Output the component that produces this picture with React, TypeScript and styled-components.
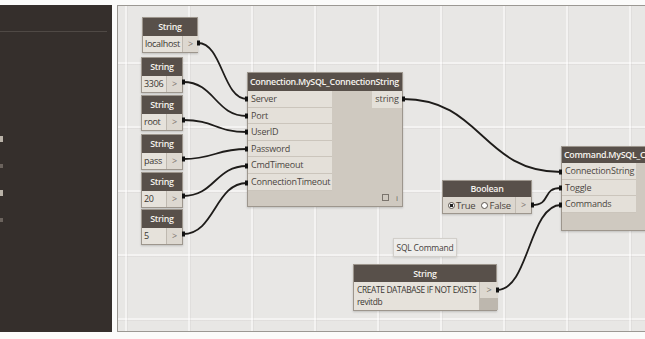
import React from 'react';
import styled, { createGlobalStyle } from 'styled-components';

const GlobalStyle = createGlobalStyle`
  html, body { margin: 0; padding: 0; background: #fbfbfa; }
  body { font-family: "Open Sans", "DejaVu Sans", sans-serif; }
`;

// canvas inner origin in page coords
const OX = 118;
const OY = 6;

const Page = styled.div`
  display: flex;
  gap: 5px;
  padding-top: 5px;
  height: 327px;
  width: 645px;
  overflow: hidden;
`;

const Sidebar = styled.div`
  width: 112px;
  flex-shrink: 0;
  background: #352f2c;
  display: flex;
  flex-direction: column;
`;

const SideHead = styled.div`
  height: 26px;
  margin-right: 5px;
  border-bottom: 1px solid #4f4945;
`;

const SideList = styled.div`
  display: flex;
  flex-direction: column;
  gap: 22px;
  padding-top: 104px;
`;

const SideChip = styled.div<{ $box?: boolean }>`
  margin-left: -4px;
  width: 7px;
  height: ${p => (p.$box ? 6 : 4)}px;
  background: ${p => (p.$box ? '#b9b2a8' : '#6b635d')};
`;

const Canvas = styled.div`
  position: relative;
  flex: 1;
  border: 1px solid #9b9893;
  border-right: none;
  background-color: #e8e7e5;
  background-image:
    linear-gradient(90deg, rgba(255,255,255,0.5) 2px, rgba(200,198,195,0.25) 2px, rgba(200,198,195,0.25) 3px, transparent 3px),
    linear-gradient(rgba(255,255,255,0.5) 2px, rgba(200,198,195,0.25) 2px, rgba(200,198,195,0.25) 3px, transparent 3px);
  background-size: 63px 64px;
  background-position: 7px 56px;
  overflow: hidden;
`;

const Wires = styled.svg`
  position: absolute;
  left: 0;
  top: 0;
  width: 100%;
  height: 100%;
  pointer-events: none;
  z-index: 2;
`;

const Node = styled.div<{ $x: number; $y: number; $w: number }>`
  position: absolute;
  left: ${p => p.$x - OX}px;
  top: ${p => p.$y - OY}px;
  width: ${p => p.$w}px;
  border: 1px solid #9d968d;
  box-sizing: border-box;
  box-shadow: 0 1px 2px rgba(0, 0, 0, 0.18);
  z-index: 1;
`;

const Header = styled.div<{ $h?: number; $left?: boolean }>`
  height: ${p => p.$h ?? 18}px;
  line-height: ${p => p.$h ?? 18}px;
  background: #58504a;
  color: #f6f3ee;
  font-size: 8.9px;
  font-weight: 600;
  letter-spacing: -0.3px;
  text-align: ${p => (p.$left ? 'left' : 'center')};
  padding: 0 2px;
  white-space: nowrap;
  overflow: hidden;
`;

const Body = styled.div<{ $h?: number }>`
  display: flex;
  background: #cfc9c0;
  ${p => (p.$h ? `height: ${p.$h}px;` : '')}
  position: relative;
`;

const ValueCell = styled.div`
  flex: 1;
  background: #e6e2db;
  border-right: 1px solid #bfb9b0;
  color: #3a3632;
  font-size: 9px;
  letter-spacing: -0.3px;
  line-height: 16px;
  padding: 0 2px;
  white-space: nowrap;
`;

const MultiLine = styled(ValueCell)`
  font-size: 8.4px;
  letter-spacing: -0.35px;
  line-height: 12px;
  padding: 2px 3px;
`;

const ArrowCell = styled.div<{ $w?: number }>`
  width: ${p => p.$w ?? 15}px;
  flex-shrink: 0;
  display: flex;
  flex-direction: column;
  color: #7a746d;
  font-size: 9px;
  text-align: center;
  background: #d9d4cc;
`;

const ArrowTop = styled.div`
  height: 16px;
  line-height: 16px;
  background: #ddd8d0;
`;

const ArrowRest = styled.div`
  flex: 1;
  background: #bdb7ae;
`;

const Inputs = styled.div<{ $w: number }>`
  width: ${p => p.$w}px;
  display: flex;
  flex-direction: column;
`;

const InRow = styled.div`
  height: 16.6px;
  line-height: 16px;
  background: #e4e0d9;
  border-bottom: 1px solid #cbc5bc;
  box-sizing: border-box;
  font-size: 9px;
  letter-spacing: -0.2px;
  color: #4b4641;
  padding-left: 3px;
  white-space: nowrap;
`;

const Outputs = styled.div`
  flex: 1;
  display: flex;
  flex-direction: column;
  align-items: flex-end;
`;

const OutRow = styled.div`
  height: 17px;
  line-height: 16px;
  background: #e4e0d9;
  font-size: 9px;
  color: #4b4641;
  padding: 0 3px;
`;

const Footer = styled.div`
  position: absolute;
  right: 4px;
  bottom: 3px;
  display: flex;
  align-items: center;
  gap: 7px;
  font-size: 8px;
  color: #6b655f;
`;

const TinyBox = styled.div`
  width: 5px;
  height: 5px;
  border: 1px solid #7a746d;
`;

const RadioRow = styled.div`
  flex: 1;
  display: flex;
  align-items: center;
  gap: 6px;
  padding-left: 5px;
  background: #dcd7cf;
  border-right: 1px solid #c3bdb4;
  font-size: 9.5px;
  letter-spacing: -0.2px;
  color: #4b4641;
  height: 16px;
`;

const Radio = styled.span<{ $on?: boolean }>`
  display: inline-flex;
  align-items: center;
  gap: 1px;
  &::before {
    content: '';
    width: 5px;
    height: 5px;
    border-radius: 50%;
    border: 1px solid #5a544e;
    background: ${p => (p.$on ? 'radial-gradient(circle, #222 0 1.6px, #fff 2px)' : '#fff')};
  }
`;

const Note = styled.div`
  position: absolute;
  left: ${393 - OX}px;
  top: ${238 - OY}px;
  width: 64px;
  height: 19px;
  box-sizing: border-box;
  background: #eeedeb;
  border: 1px solid #d2cfca;
  box-shadow: 0 1px 2px rgba(0, 0, 0, 0.12);
  font-size: 8.5px;
  letter-spacing: -0.2px;
  color: #47423d;
  text-align: center;
  line-height: 17px;
`;

type StringNode = { x: number; y: number; w: number; v: string };

const strings: StringNode[] = [
  { x: 142, y: 17, w: 56, v: 'localhost' },
  { x: 141, y: 57, w: 42, v: '3306' },
  { x: 141, y: 95, w: 42, v: 'root' },
  { x: 141, y: 134, w: 42, v: 'pass' },
  { x: 141, y: 172, w: 42, v: '20' },
  { x: 141, y: 209, w: 42, v: '5' },
];

const connInputs = ['Server', 'Port', 'UserID', 'Password', 'CmdTimeout', 'ConnectionTimeout'];
const cmdInputs = ['ConnectionString', 'Toggle', 'Commands'];

// wires in page coordinates
const wires: [number, number, number, number][] = [
  [198, 43, 247, 99],
  [183, 82, 247, 116],
  [183, 120, 247, 132],
  [183, 159, 247, 149],
  [183, 196, 247, 166],
  [183, 234, 247, 183],
  [403, 99, 561, 172],
  [532, 205, 561, 188],
  [497, 290, 561, 205],
];

function wirePath([x1, y1, x2, y2]: [number, number, number, number]) {
  const dx = Math.max((x2 - x1) * 0.5, 20);
  return `M${x1} ${y1} C${x1 + dx} ${y1} ${x2 - dx} ${y2} ${x2} ${y2}`;
}

export default function App() {
  return (
    <>
      <GlobalStyle />
      <Page>
        <Sidebar>
          <SideHead />
          <SideList>
            <SideChip $box />
            <SideChip />
            <SideChip $box />
            <SideChip />
          </SideList>
        </Sidebar>

        <Canvas>
          {strings.map(s => (
            <Node key={s.v} $x={s.x} $y={s.y} $w={s.w}>
              <Header>String</Header>
              <Body>
                <ValueCell>{s.v}</ValueCell>
                <ArrowCell>
                  <ArrowTop>&gt;</ArrowTop>
                </ArrowCell>
              </Body>
            </Node>
          ))}

          <Node $x={247} $y={72} $w={156}>
            <Header $left>Connection.MySQL_ConnectionString</Header>
            <Body $h={115}>
              <Inputs $w={84}>
                {connInputs.map(i => (
                  <InRow key={i}>{i}</InRow>
                ))}
              </Inputs>
              <Outputs>
                <OutRow>string</OutRow>
              </Outputs>
              <Footer>
                <TinyBox />
                <span>i</span>
              </Footer>
            </Body>
          </Node>

          <Node $x={561} $y={146} $w={170}>
            <Header $h={16} $left>Command.MySQL_CommandExecute</Header>
            <Body $h={67}>
              <Inputs $w={74}>
                {cmdInputs.map(i => (
                  <InRow key={i}>{i}</InRow>
                ))}
              </Inputs>
            </Body>
          </Node>

          <Node $x={442} $y={180} $w={90}>
            <Header $h={16}>Boolean</Header>
            <Body>
              <RadioRow>
                <Radio $on>True</Radio>
                <Radio>False</Radio>
              </RadioRow>
              <ArrowCell $w={15}>
                <ArrowTop>&gt;</ArrowTop>
              </ArrowCell>
            </Body>
          </Node>

          <Note>SQL Command</Note>

          <Node $x={353} $y={264} $w={144}>
            <Header $h={17}>String</Header>
            <Body>
              <MultiLine>
                CREATE DATABASE IF NOT EXISTS
                <br />
                revitdb
              </MultiLine>
              <ArrowCell $w={18}>
                <ArrowTop>&gt;</ArrowTop>
                <ArrowRest />
              </ArrowCell>
            </Body>
          </Node>

          <Wires>
            <g transform={`translate(${-OX} ${-OY})`}>
              {wires.map((w, i) => (
                <g key={i}>
                  <path d={wirePath(w)} fill="none" stroke="#1e1c1a" strokeWidth={1.8} />
                  <rect x={w[0] - 1} y={w[1] - 2.5} width={3} height={5} fill="#111" />
                  <rect x={w[2] - 2} y={w[3] - 2.5} width={3} height={5} fill="#111" />
                </g>
              ))}
            </g>
          </Wires>
        </Canvas>
      </Page>
    </>
  );
}
